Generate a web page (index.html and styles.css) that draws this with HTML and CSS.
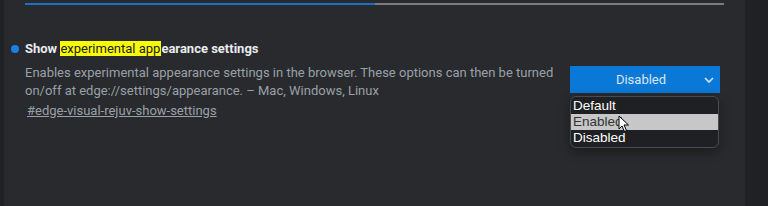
FILE: index.html
```html
<!DOCTYPE html>
<html>
<head>
<meta charset="utf-8">
<link rel="stylesheet" href="styles.css">
</head>
<body>
<div class="page">
  <div class="edge-left"></div>
  <main class="main">
    <div class="tabline"><div class="tabline-active"></div></div>
    <section class="experiment">
      <div class="exp-text">
        <h3 class="exp-title"><span class="dot"></span>Show <mark class="hl">experimental app</mark>earance settings</h3>
        <p class="exp-desc">Enables experimental appearance settings in the browser. These options can then be turned on/off at edge://settings/appearance. – Mac, Windows, Linux</p>
        <a class="exp-link" href="#">#edge-visual-rejuv-show-settings</a>
      </div>
      <div class="exp-control">
        <div class="select">
          <span class="select-label">Disabled</span>
          <svg class="chev" width="10" height="6" viewBox="0 0 10 6"><path d="M1 1 L5 5 L9 1" fill="none" stroke="#d6e6f7" stroke-width="1.6"/></svg>
        </div>
        <ul class="menu">
          <li class="opt">Default</li>
          <li class="opt opt-hover">Enabled</li>
          <li class="opt">Disabled</li>
        </ul>
        <svg class="cursor" width="12" height="18" viewBox="0 0 12 18"><path d="M1 1 L1 14 L4 11 L6.5 16.5 L8.5 15.5 L6 10 L10.5 10 Z" fill="#fff" stroke="#000" stroke-width="1"/></svg>
      </div>
    </section>
  </main>
  <div class="edge-right"></div>
</div>
</body>
</html>
```
FILE: styles.css
```css
html, body {
  margin: 0;
  padding: 0;
  height: 100%;
  background: #292a2d;
}
.page {
  display: flex;
  height: 206px;
  font-family: Roboto, "Liberation Sans", sans-serif;
}
.edge-left {
  width: 4px;
  background: #202124;
}
.edge-right {
  width: 23px;
  background: #202124;
}
.main {
  flex: 1;
  padding: 3px 21px 0 21px;
}
.tabline {
  height: 2px;
  background: #7a7c80;
  display: flex;
}
.tabline-active {
  width: 350px;
  background: #1f6fbf;
}
.experiment {
  display: flex;
  justify-content: space-between;
  margin-top: 36px;
}
.exp-text {
  width: 540px;
}
.exp-title {
  position: relative;
  margin: 0;
  font-size: 13px;
  font-weight: bold;
  color: #e8eaed;
  line-height: 16px;
}
.dot {
  position: absolute;
  left: -14px;
  top: 4px;
  width: 8px;
  height: 8px;
  border-radius: 50%;
  background: #1a7ee8;
}
.hl {
  background: #ffff00;
  color: #202124;
  font-weight: normal;
  padding-right: 1px;
}
.exp-desc {
  margin: 7px 0 0 0;
  font-size: 13px;
  line-height: 18px;
  color: #9aa0a6;
}
.exp-link {
  display: inline-block;
  margin: 2px 0 0 2px;
  font-size: 13px;
  line-height: 18px;
  color: #9aa0a6;
  text-decoration: underline;
}
.exp-control {
  position: relative;
  width: 150px;
  margin-top: 25px;
  margin-right: 4px;
}
.select {
  height: 27px;
  background: #0a78d7;
  display: flex;
  align-items: center;
  justify-content: center;
  position: relative;
}
.select-label {
  font-size: 13px;
  color: #d6e6f7;
  margin-left: -8px;
}
.chev {
  position: absolute;
  right: 6px;
  top: 11px;
}
.menu {
  position: absolute;
  left: 0;
  top: 30px;
  width: 147px;
  margin: 0;
  padding: 1px 0;
  list-style: none;
  border: 1px solid #4a4b4e;
  border-radius: 6px;
  background: #1f2023;
  box-shadow: 0 4px 12px rgba(0,0,0,0.35);
  font-family: "Liberation Sans", Arial, sans-serif;
}
.opt {
  height: 16px;
  line-height: 16px;
  font-size: 13.5px;
  color: #ffffff;
  padding-left: 2px;
}
.opt-hover {
  background: #c7c7c7;
  color: #333333;
}
.cursor {
  position: absolute;
  left: 48px;
  top: 49px;
}
```
